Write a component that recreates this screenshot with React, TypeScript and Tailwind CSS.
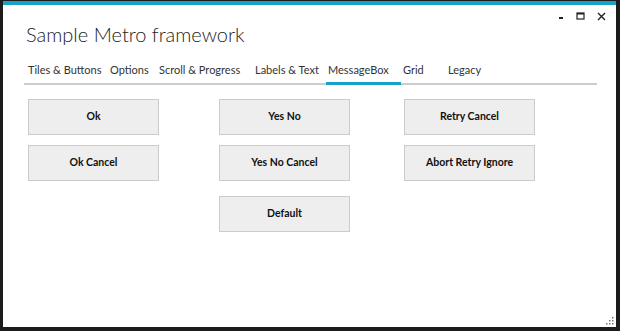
import React from 'react';

const tabs = [
  { label: 'Tiles & Buttons', w: 'w-[84px] pl-[4px]' },
  { label: 'Options', w: 'w-[49px] pl-[2px]' },
  { label: 'Scroll & Progress', w: 'w-[96px] pl-[2px]' },
  { label: 'Labels & Text', w: 'w-[73px] pl-[2px]' },
  { label: 'MessageBox', w: 'w-[75px] pl-[2px]', active: true },
  { label: 'Grid', w: 'w-[45px] pl-[2px]' },
  { label: 'Legacy', w: 'w-[50px] pl-[2px]' },
];

function MetroButton({ children, className = '' }: { children: React.ReactNode; className?: string }) {
  return (
    <button className={`w-[131px] h-[36px] bg-[#eeeeee] border border-[#cccccc] text-[10.5px] font-bold text-[#111111] flex items-center justify-center ${className}`}>
      {children}
    </button>
  );
}

export default function App() {
  return (
    <div className="w-[620px] h-[331px] bg-[#1b1b1b] pl-[3px] pr-[4px] pb-[4px] font-['Segoe_UI','Lato','Open_Sans',sans-serif] overflow-hidden">
      <div className="relative h-full bg-white border-t border-[#1b1b1b]">
        {/* accent bar */}
        <div className="h-[4px] bg-[#17a2c7]" />

        {/* window controls */}
        <div className="absolute top-[10px] right-[10px] flex items-center gap-[12px] text-[#222]">
          <svg width="6" height="10" viewBox="0 0 6 10"><rect x="1" y="6" width="4" height="2" fill="#222" /></svg>
          <svg width="9" height="8" viewBox="0 0 9 8"><rect x="1" y="1" width="7" height="6" fill="none" stroke="#222" strokeWidth="1.2" /><rect x="1" y="1" width="7" height="1.5" fill="#222" /></svg>
          <svg width="9" height="9" viewBox="0 0 9 9"><path d="M1 1 L8 8 M8 1 L1 8" stroke="#222" strokeWidth="1.4" /></svg>
        </div>

        {/* title */}
        <h1 className="ml-[23px] mt-[15px] text-[20px] leading-[28px] font-light text-[#222]">Sample Metro framework</h1>

        {/* tabs */}
        <div className="ml-[21px] mt-[14px] w-[573px] flex border-b-2 border-[#cccccc]">
          {tabs.map((t) => (
            <div
              key={t.label}
              className={`${t.w} pb-[5px] -mb-[2px] border-b-[3px] text-[11px] leading-[15px] text-[#333] whitespace-nowrap ${t.active ? 'border-[#17a2c7]' : 'border-transparent'}`}
            >
              {t.label}
            </div>
          ))}
        </div>

        {/* message box buttons */}
        <div className="flex ml-[25px] mt-[14px]">
          <div className="flex flex-col gap-[10px]">
            <MetroButton>Ok</MetroButton>
            <MetroButton>Ok Cancel</MetroButton>
          </div>
          <div className="flex flex-col gap-[10px] ml-[60px]">
            <MetroButton>Yes No</MetroButton>
            <MetroButton>Yes No Cancel</MetroButton>
            <MetroButton className="mt-[5px]">Default</MetroButton>
          </div>
          <div className="flex flex-col gap-[10px] ml-[54px]">
            <MetroButton>Retry Cancel</MetroButton>
            <MetroButton>Abort Retry Ignore</MetroButton>
          </div>
        </div>

        {/* resize grip */}
        <svg className="absolute right-[2px] bottom-[2px]" width="8" height="8" viewBox="0 0 8 8" fill="#777">
          <rect x="6" y="0" width="1.5" height="1.5" />
          <rect x="3" y="3" width="1.5" height="1.5" />
          <rect x="6" y="3" width="1.5" height="1.5" />
          <rect x="0" y="6" width="1.5" height="1.5" />
          <rect x="3" y="6" width="1.5" height="1.5" />
          <rect x="6" y="6" width="1.5" height="1.5" />
        </svg>
      </div>
    </div>
  );
}
